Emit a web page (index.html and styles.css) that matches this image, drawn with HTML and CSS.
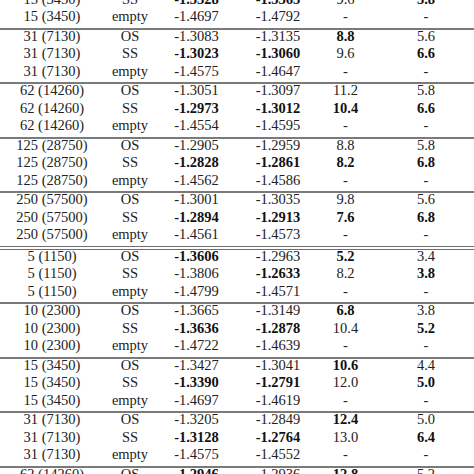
FILE: index.html
```html
<!DOCTYPE html>
<html>
<head>
<meta charset="utf-8">
<link rel="stylesheet" href="styles.css">
</head>
<body>
<table class="results">
<colgroup>
<col class="c-size"><col class="c-type"><col class="c-a"><col class="c-b"><col class="c-p"><col class="c-q">
</colgroup>
<tbody class="first">
<tr><td>15 (3450)</td><td>SS</td><td class="b">-1.3328</td><td class="b">-1.3363</td><td>9.6</td><td class="b">5.8</td></tr>
<tr><td>15 (3450)</td><td>empty</td><td>-1.4697</td><td>-1.4792</td><td>-</td><td>-</td></tr>
</tbody>
<tbody>
<tr><td>31 (7130)</td><td>OS</td><td>-1.3083</td><td>-1.3135</td><td class="b">8.8</td><td>5.6</td></tr>
<tr><td>31 (7130)</td><td>SS</td><td class="b">-1.3023</td><td class="b">-1.3060</td><td>9.6</td><td class="b">6.6</td></tr>
<tr><td>31 (7130)</td><td>empty</td><td>-1.4575</td><td>-1.4647</td><td>-</td><td>-</td></tr>
</tbody>
<tbody>
<tr><td>62 (14260)</td><td>OS</td><td>-1.3051</td><td>-1.3097</td><td>11.2</td><td>5.8</td></tr>
<tr><td>62 (14260)</td><td>SS</td><td class="b">-1.2973</td><td class="b">-1.3012</td><td class="b">10.4</td><td class="b">6.6</td></tr>
<tr><td>62 (14260)</td><td>empty</td><td>-1.4554</td><td>-1.4595</td><td>-</td><td>-</td></tr>
</tbody>
<tbody>
<tr><td>125 (28750)</td><td>OS</td><td>-1.2905</td><td>-1.2959</td><td>8.8</td><td>5.8</td></tr>
<tr><td>125 (28750)</td><td>SS</td><td class="b">-1.2828</td><td class="b">-1.2861</td><td class="b">8.2</td><td class="b">6.8</td></tr>
<tr><td>125 (28750)</td><td>empty</td><td>-1.4562</td><td>-1.4586</td><td>-</td><td>-</td></tr>
</tbody>
<tbody>
<tr><td>250 (57500)</td><td>OS</td><td>-1.3001</td><td>-1.3035</td><td>9.8</td><td>5.6</td></tr>
<tr><td>250 (57500)</td><td>SS</td><td class="b">-1.2894</td><td class="b">-1.2913</td><td class="b">7.6</td><td class="b">6.8</td></tr>
<tr><td>250 (57500)</td><td>empty</td><td>-1.4561</td><td>-1.4573</td><td>-</td><td>-</td></tr>
</tbody>
<tbody class="double">
<tr><td>5 (1150)</td><td>OS</td><td class="b">-1.3606</td><td>-1.2963</td><td class="b">5.2</td><td>3.4</td></tr>
<tr><td>5 (1150)</td><td>SS</td><td>-1.3806</td><td class="b">-1.2633</td><td>8.2</td><td class="b">3.8</td></tr>
<tr><td>5 (1150)</td><td>empty</td><td>-1.4799</td><td>-1.4571</td><td>-</td><td>-</td></tr>
</tbody>
<tbody>
<tr><td>10 (2300)</td><td>OS</td><td>-1.3665</td><td>-1.3149</td><td class="b">6.8</td><td>3.8</td></tr>
<tr><td>10 (2300)</td><td>SS</td><td class="b">-1.3636</td><td class="b">-1.2878</td><td>10.4</td><td class="b">5.2</td></tr>
<tr><td>10 (2300)</td><td>empty</td><td>-1.4722</td><td>-1.4639</td><td>-</td><td>-</td></tr>
</tbody>
<tbody>
<tr><td>15 (3450)</td><td>OS</td><td>-1.3427</td><td>-1.3041</td><td class="b">10.6</td><td>4.4</td></tr>
<tr><td>15 (3450)</td><td>SS</td><td class="b">-1.3390</td><td class="b">-1.2791</td><td>12.0</td><td class="b">5.0</td></tr>
<tr><td>15 (3450)</td><td>empty</td><td>-1.4697</td><td>-1.4619</td><td>-</td><td>-</td></tr>
</tbody>
<tbody>
<tr><td>31 (7130)</td><td>OS</td><td>-1.3205</td><td>-1.2849</td><td class="b">12.4</td><td>5.0</td></tr>
<tr><td>31 (7130)</td><td>SS</td><td class="b">-1.3128</td><td class="b">-1.2764</td><td>13.0</td><td class="b">6.4</td></tr>
<tr><td>31 (7130)</td><td>empty</td><td>-1.4575</td><td>-1.4552</td><td>-</td><td>-</td></tr>
</tbody>
<tbody>
<tr><td>62 (14260)</td><td>OS</td><td class="b">-1.2946</td><td>-1.2936</td><td class="b">12.8</td><td>5.2</td></tr>
</tbody>
</table>
</body>
</html>
```

FILE: styles.css
```css
html, body {
  margin: 0;
  padding: 0;
  background: #ffffff;
  overflow: hidden;
}

.results {
  margin-top: -7.5px;
  width: 480px;
  table-layout: fixed;
  border-collapse: collapse;
  font-family: "Liberation Serif", "Times New Roman", serif;
  font-size: 14.5px;
  color: #222222;
}

.c-size { width: 104px; }
.c-type { width: 52px; }
.c-a { width: 81px; }
.c-b { width: 82px; }
.c-p { width: 53px; }
.c-q { width: 108px; }

.results td {
  padding: 0 0 5px 0;
  height: 12.5px;
  line-height: 12.5px;
  text-align: center;
  vertical-align: top;
  white-space: nowrap;
}

.results tbody {
  border-top: 2px solid #7a7a7a;
}

.results tbody.first {
  border-top: none;
}

.results tbody.double {
  border-top: 4px double #6e6e6e;
}

.results td.b {
  font-weight: bold;
  color: #111111;
}
```
